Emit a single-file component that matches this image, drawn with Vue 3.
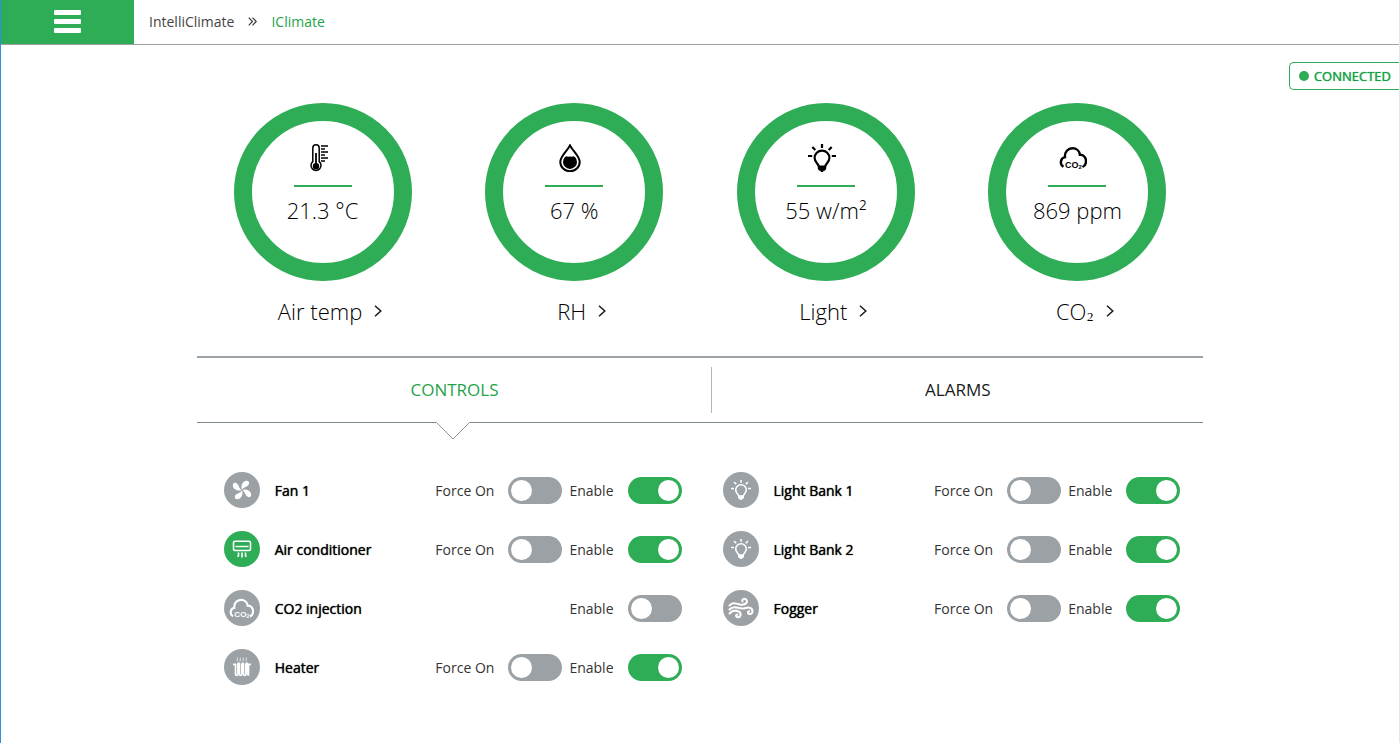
<script setup>
import { ref } from 'vue'

const gauges = [
  { id: 'temp', icon: 'thermometer', value: '21.3 °C', label: 'Air temp' },
  { id: 'rh', icon: 'drop', value: '67 %', label: 'RH' },
  { id: 'light', icon: 'bulb', value: '55 w/m²', label: 'Light' },
  { id: 'co2', icon: 'co2', value: '869 ppm', label: 'CO', sub: '₂' }
]

const tabs = ['Controls', 'Alarms']
const activeTab = ref('Controls')

const columns = ref([
  [
    { name: 'Fan 1', icon: 'fan', force: false, enable: true },
    { name: 'Air conditioner', icon: 'aircon', active: true, force: false, enable: true },
    { name: 'CO2 injection', icon: 'co2', noForce: true, enable: false },
    { name: 'Heater', icon: 'heater', force: false, enable: true }
  ],
  [
    { name: 'Light Bank 1', icon: 'bulb', force: false, enable: true },
    { name: 'Light Bank 2', icon: 'bulb', force: false, enable: true },
    { name: 'Fogger', icon: 'fogger', force: false, enable: true }
  ]
])
</script>

<template>
  <div class="page">
    <!-- icon sprite -->
    <svg class="sprite" aria-hidden="true">
      <symbol id="thermometer" viewBox="0 0 28 28">
        <path d="M7.8 17.6V4a3.2 3.2 0 0 1 6.4 0v13.6a5 5 0 1 1-6.4 0z" fill="none" stroke="currentColor" stroke-width="1.5" />
        <circle cx="11" cy="22.2" r="3.2" fill="currentColor" />
        <path d="M11 9v11" stroke="currentColor" stroke-width="1.8" />
        <path d="M16 2h7M16 5h4M16 8h7M16 11h4M16 14h7M16 17h4" stroke="currentColor" stroke-width="1.4" />
      </symbol>
      <symbol id="drop" viewBox="0 0 28 28">
        <path d="M14 1.4C11 7.5 4.3 12 4.3 18a9.7 9.3 0 0 0 19.4 0C23.7 12 17 7.5 14 1.4z" fill="none" stroke="currentColor" stroke-width="2" />
        <path d="M9 13l1.500-.8 1.500.6 2-.4 2 .4 1.500-.6L19 13a7 7 0 1 1-10 0z" fill="currentColor" />
      </symbol>
      <symbol id="bulb" viewBox="0 0 28 28">
        <path d="M11 23c0-3-4.400-4.500-4.400-9a7.400 7.400 0 0 1 14.800 0c0 4.500-4.400 6-4.400 9" fill="none" stroke="currentColor" stroke-width="2.200" />
        <path d="M9.800 21.500h8.400v3.500l-1.500 1.800h-1.200l-.5 1.200h-2l-.5-1.200h-1.200L9.800 25z" fill="currentColor" />
        <path d="M14 0v4M0 12h4.200M23.800 12H28M4.300 3l3 3M23.700 3l-3 3" stroke="currentColor" stroke-width="2.200" />
      </symbol>
      <symbol id="co2" viewBox="0 0 28 28">
        <path d="M4.500 22.800A5.200 5.200 0 0 1 6 13.200C5.500 8 9 4.300 13.500 4.300c4 0 7 2.700 7.400 6.500 3.500-.2 6.100 2.600 6.100 6.200 0 3-1.200 5-3.500 6" fill="none" stroke="currentColor" stroke-width="2.400" />
      </symbol>
      <symbol id="fan" viewBox="0 0 20 20">
        <g fill="currentColor">
          <path d="M10 9.600C8.300 5.500 11 .6 15 .8c3 .4 2.500 3.700.6 5C13.500 7.200 11.500 7.500 10 9.600z" />
          <path d="M10 9.600C8.300 5.500 11 .6 15 .8c3 .4 2.500 3.700.6 5C13.500 7.200 11.500 7.500 10 9.600z" transform="rotate(90 10 10)" />
          <path d="M10 9.600C8.300 5.500 11 .6 15 .8c3 .4 2.500 3.700.6 5C13.500 7.200 11.500 7.500 10 9.600z" transform="rotate(180 10 10)" />
          <path d="M10 9.600C8.300 5.500 11 .6 15 .8c3 .4 2.500 3.700.6 5C13.500 7.200 11.500 7.500 10 9.600z" transform="rotate(270 10 10)" />
        </g>
      </symbol>
      <symbol id="aircon" viewBox="0 0 20 20">
        <g fill="none" stroke="currentColor" stroke-width="1.600">
          <rect x="1.500" y="2.300" width="17" height="9.200" rx="1.500" />
          <path d="M3.500 7.500h13" stroke-width="1.400" />
          <path d="M6.500 13.500v3.200l-1 1M10 13.500v5M13.500 13.500v3.200l1 1" />
        </g>
      </symbol>
      <symbol id="heater" viewBox="0 0 20 20">
        <g fill="none" stroke="currentColor">
          <path d="M1 7.300h2.500v9.500q0 1.700 1.200 1.700t1.200-1.700V7q0-.8.800-.8t.8.800v9.800q0 1.700 1.200 1.700t1.200-1.700V7q0-.8.800-.8t.8.800v9.800q0 1.700 1.200 1.700t1.200-1.700V7q0-.8.800-.8t.8.800v9.800q0 1.200 1 1.200V7.300H19" stroke-width="1.700" />
          <path d="M5 .5q1 1 .3 2t.4 1.800M8 .5q1 1 .3 2t.4 1.800M11 .5q1 1 .3 2t.4 1.800M14 .5q1 1 .3 2t.4 1.800" stroke-width=".8" />
        </g>
      </symbol>
      <symbol id="fogger" viewBox="0 0 26 26">
        <g fill="none" stroke="currentColor" stroke-width="2" stroke-linecap="round">
          <path d="M1.500 10.500C5 6.500 8 8.700 12 9.500c5 .8 8-1.500 6.500-4.500-1.300-2.200-5-1.200-4 1.300" />
          <path d="M1.500 14.500c4-4.500 8-1.200 12.500-1 3.500 0 5-1.500 7.500-.8 4.500 1.300 3.500 6.800-.3 6.300-2-.5-1.500-2.800 0-2.800" />
          <path d="M1.500 18.500c3-3.500 6.500-3.300 9.500-1.800 3 2 1.500 6-1.500 5.500-2-.3-1.800-2.500-.2-2.600" />
        </g>
      </symbol>
    </svg>

    <header class="topbar">
      <button class="menu-btn" aria-label="Menu">
        <span></span>
        <span></span>
        <span></span>
      </button>
      <nav class="crumbs">
        <a href="#" class="crumb">IntelliClimate</a>
        <svg class="crumb-sep" viewBox="0 0 8 8" aria-hidden="true">
          <path d="M.7.500 4 4 .7 7.500M4 .500 7.300 4 4 7.500" />
        </svg>
        <a href="#" class="crumb current">IClimate</a>
      </nav>
    </header>

    <div class="status"><i class="status-dot"></i>CONNECTED</div>

    <main class="content">
      <section class="gauges">
        <div v-for="g in gauges" :key="g.id" class="gauge">
          <div class="ring">
            <svg class="ring-icon" viewBox="0 0 28 28" aria-hidden="true">
              <use :href="'#' + g.icon" />
              <text v-if="g.icon === 'co2'" class="co2-text" x="6" y="24">CO<tspan class="co2-sub" dy="1">2</tspan></text>
            </svg>
            <span class="ring-line"></span>
            <span class="ring-value">{{ g.value }}</span>
          </div>
          <a href="#" class="gauge-link">
            <span>{{ g.label }}<span v-if="g.sub" class="label-sub">{{ g.sub }}</span></span>
            <svg class="chevron" viewBox="0 0 8 12" aria-hidden="true">
              <path d="M1 .8 6.800 6 1 11.200" />
            </svg>
          </a>
        </div>
      </section>

      <div class="tabs">
        <button
          v-for="tab in tabs"
          :key="tab"
          class="tab"
          :class="{ active: tab === activeTab }"
          @click="activeTab = tab"
        >
          {{ tab }}
          <svg v-if="tab === activeTab" class="tab-arrow" viewBox="0 0 34 18" aria-hidden="true">
            <path class="arrow-fill" d="M0 0h34L17 17z" />
            <path class="arrow-line" d="M.5 .5 17 17 33.500 .5" />
          </svg>
        </button>
      </div>

      <section v-if="activeTab === 'Controls'" class="controls">
        <div v-for="(col, i) in columns" :key="i" class="column">
          <div v-for="item in col" :key="item.name" class="row">
            <span class="badge" :class="{ on: item.active }">
              <svg :class="'icon-' + item.icon" viewBox="0 0 28 28" aria-hidden="true">
                <use :href="'#' + item.icon" />
                <text v-if="item.icon === 'co2'" class="co2-text" x="6" y="24">CO<tspan class="co2-sub" dy="1">2</tspan></text>
              </svg>
            </span>
            <span class="name">{{ item.name }}</span>
            <label v-if="!item.noForce" class="switch">
              Force On
              <input v-model="item.force" type="checkbox" />
            </label>
            <label class="switch">
              Enable
              <input v-model="item.enable" type="checkbox" />
            </label>
          </div>
        </div>
      </section>
    </main>
  </div>
</template>

<style>
body {
  margin: 0;
  background: #fff;
}
</style>

<style scoped>
.page {
  box-sizing: border-box;
  min-height: 100vh;
  border-left: 1px solid #2f8fe0;
  border-right: 1px solid #e6e6e6;
  font-family: 'Open Sans', sans-serif;
  color: #000;
}

.sprite {
  display: none;
}

a {
  color: inherit;
  text-decoration: none;
}

button {
  font-family: inherit;
  border: none;
  background: none;
  cursor: pointer;
}

/* header */
.topbar {
  display: flex;
  height: 44px;
  border-bottom: 1px solid #9ca3a8;
}

.menu-btn {
  display: flex;
  flex-direction: column;
  align-items: center;
  justify-content: center;
  gap: 4px;
  width: 133px;
  padding: 0 0 2px;
  background: #2eac56;
}

.menu-btn span {
  width: 27px;
  height: 5px;
  border-radius: 1px;
  background: #fff;
}

.crumbs {
  display: flex;
  align-items: center;
  gap: 14px;
  padding: 0 0 2px 15px;
  font-size: 14px;
  color: #444;
}

.crumb.current {
  color: #1fa34a;
}

.crumb-sep {
  width: 9px;
  height: 9px;
  fill: none;
  stroke: #333;
}

/* connection badge */
.status {
  display: flex;
  align-items: center;
  gap: 5px;
  box-sizing: border-box;
  width: fit-content;
  height: 28px;
  margin: 17px 0 0 auto;
  padding: 0 8px 0 9px;
  border: 1px solid #2eac56;
  border-right: none;
  border-radius: 5px 0 0 5px;
  font-size: 13px;
  color: #16a045;
  text-shadow: 0 0 1px #16a045;
}

.status-dot {
  width: 10px;
  height: 10px;
  border-radius: 50%;
  background: #2eac56;
}

.content {
  width: 72%;
  margin: 13px auto 0;
}

/* gauges */
.gauges {
  display: flex;
  padding-bottom: 29px;
}

.gauge {
  flex: 1;
  display: flex;
  flex-direction: column;
  align-items: center;
}

.ring {
  display: flex;
  flex-direction: column;
  align-items: center;
  box-sizing: border-box;
  width: 178px;
  height: 178px;
  padding-top: 23px;
  border: 18px solid #2eac56;
  border-radius: 50%;
}

.ring-icon {
  width: 28px;
  height: 28px;
  margin-right: 8px;
}

.co2-text {
  font-family: 'Liberation Sans', sans-serif;
  font-size: 9px;
  font-weight: 700;
  fill: currentColor;
}

.co2-sub {
  font-size: 6px;
}

.ring-line {
  width: 58px;
  height: 2px;
  margin: 13px 0 7px;
  background: #2eac56;
}

.ring-value,
.gauge-link {
  font-size: 22px;
  font-weight: 300;
  line-height: 32px;
}

.gauge-link {
  display: flex;
  align-items: center;
  gap: 12px;
  margin-top: 14px;
  padding-left: 15px;
}

.label-sub {
  font-family: 'Liberation Serif', serif;
  line-height: 0;
  vertical-align: 3px;
}

.chevron {
  width: 8px;
  height: 12px;
  fill: none;
  stroke: #1a1a1a;
  stroke-width: 1.5;
}

/* tabs */
.tabs {
  display: flex;
  border-top: 2px solid #9ca3a8;
  border-bottom: 1px solid #7f888d;
}

.tab {
  position: relative;
  flex: 20;
  height: 64px;
  padding: 0 0 2px;
  font-size: 17px;
  text-transform: uppercase;
  color: #1a1a1a;
}

.tab:first-child {
  flex: 21;
}

.tab:first-child::after {
  content: '';
  position: absolute;
  top: 9px;
  right: 0;
  bottom: 9px;
  width: 1px;
  background: #b0b6b9;
}

.tab.active {
  color: #1fa34a;
}

.tab-arrow {
  position: absolute;
  top: 100%;
  left: 50%;
  width: 34px;
  height: 18px;
  margin-left: -18px;
}

.arrow-fill {
  fill: #fff;
}

.arrow-line {
  fill: none;
  stroke: #8b9498;
}

/* controls */
.controls {
  display: flex;
  gap: 41px;
  padding: 49px 23px 50px 27px;
}

.column {
  flex: 1;
  display: flex;
  flex-direction: column;
  gap: 23px;
}

.row {
  display: flex;
  align-items: center;
  height: 36px;
}

.badge {
  display: flex;
  align-items: center;
  justify-content: center;
  width: 36px;
  height: 36px;
  border-radius: 50%;
  background: #9ba1a5;
  color: #fff;
}

.badge.on {
  background: #2eac56;
}

.badge svg {
  width: 20px;
  height: 20px;
}

.badge .icon-co2 {
  width: 25px;
  height: 25px;
}

.badge .icon-fogger {
  width: 26px;
  height: 26px;
}

.name {
  flex: 1;
  padding-left: 15px;
  font-size: 14px;
  text-shadow: 0 0 1px #000;
}

.switch {
  display: flex;
  align-items: center;
  gap: 14px;
  margin-left: 7px;
  font-size: 14px;
  color: #333;
}

.switch input {
  appearance: none;
  display: flex;
  align-items: center;
  box-sizing: border-box;
  width: 54px;
  height: 27px;
  margin: 0;
  padding: 0 3px;
  border-radius: 14px;
  background: #9ba1a5;
  cursor: pointer;
}

.switch input::before {
  content: '';
  width: 21px;
  height: 21px;
  border-radius: 50%;
  background: #fff;
}

.switch input:checked {
  justify-content: flex-end;
  background: #2eac56;
}
</style>
